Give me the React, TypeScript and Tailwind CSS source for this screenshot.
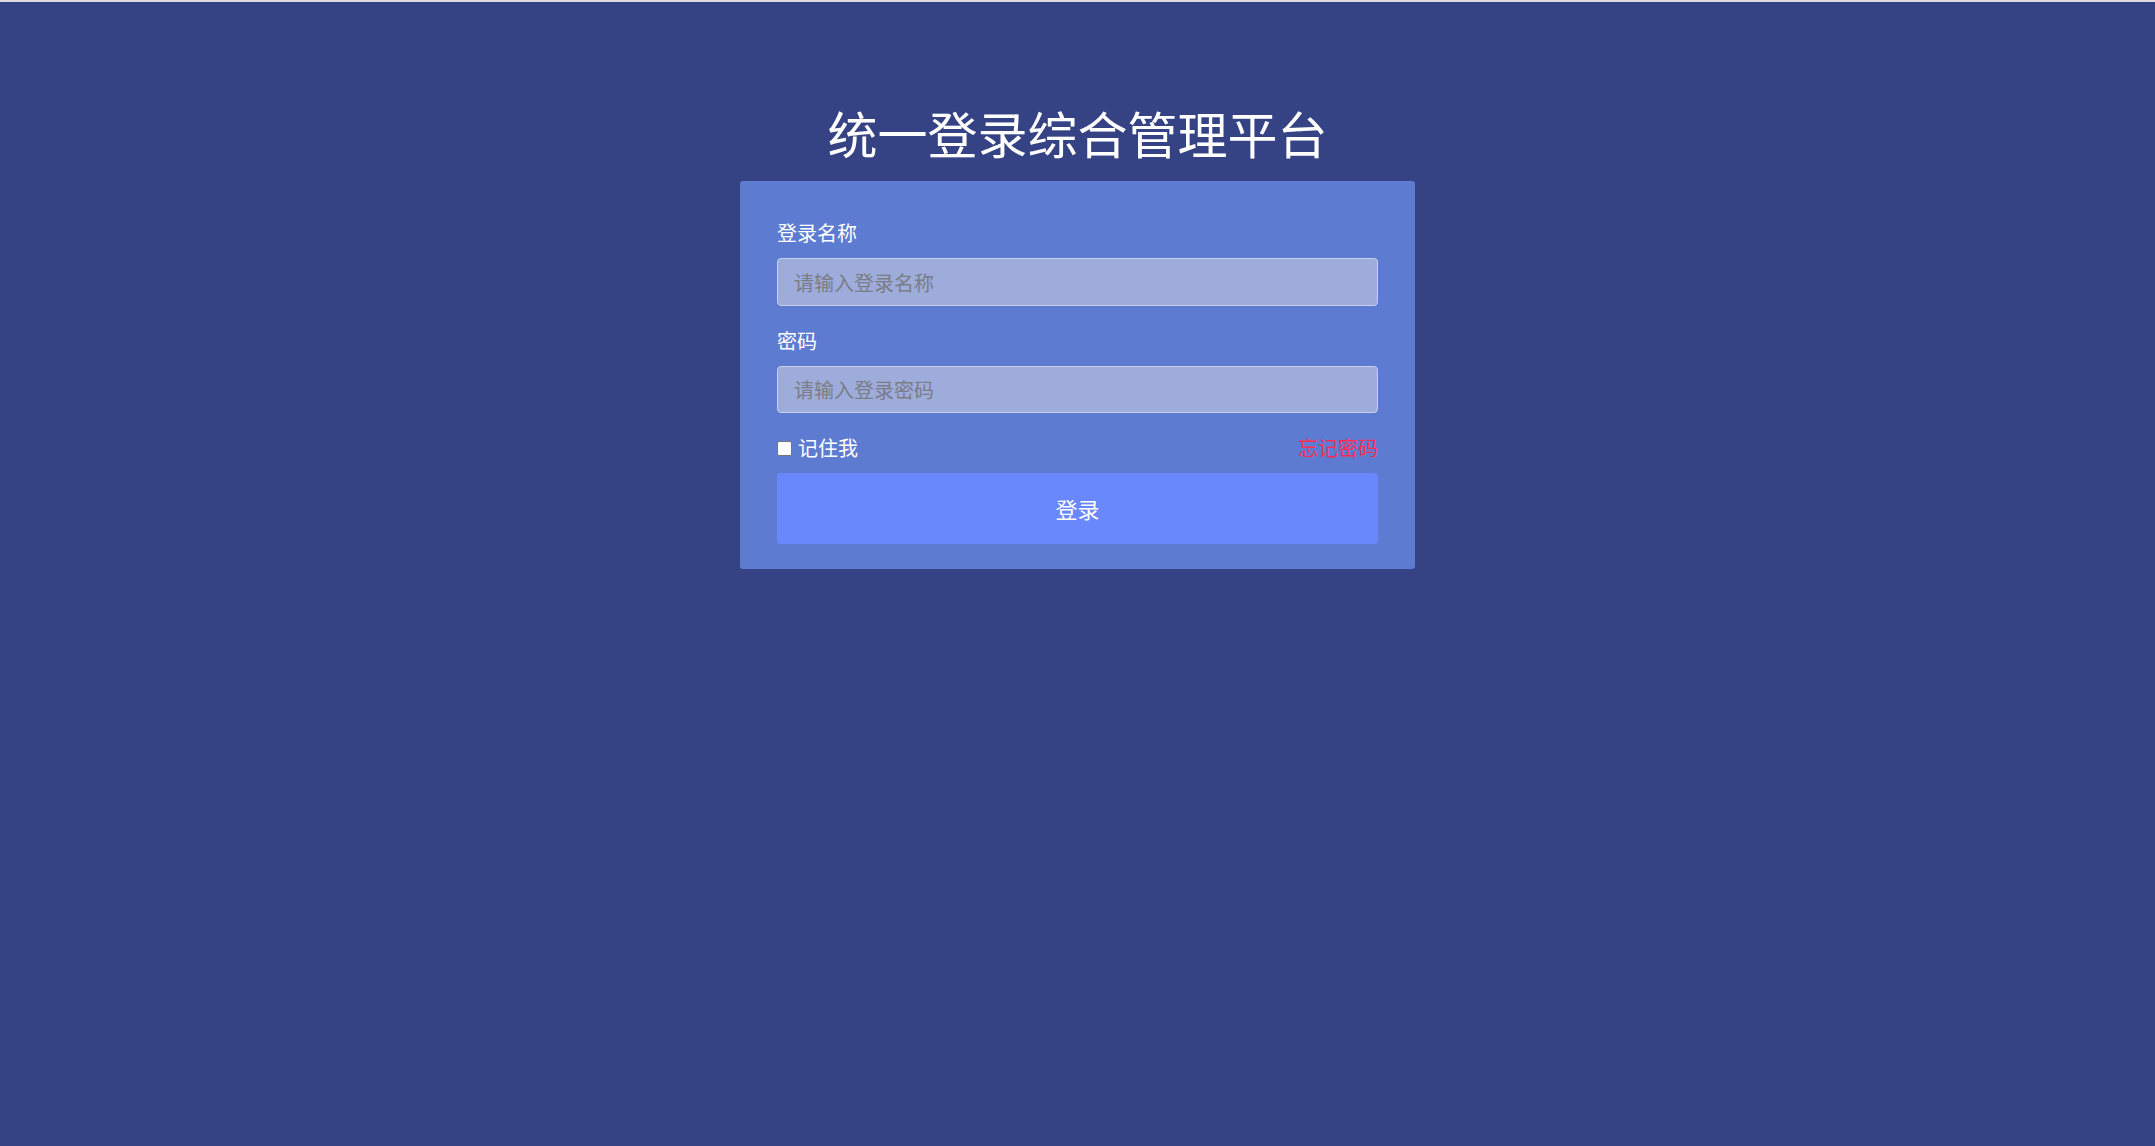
import React from "react";

export default function App() {
  const font = { fontFamily: '"Noto Sans CJK SC", "Noto Sans", sans-serif' };
  return (
    <div className="min-h-screen w-full bg-[#354384] flex flex-col" style={font}>
      <div className="h-[2px] w-full bg-[#dcdde2]" />
      <div className="flex flex-col items-center pt-[103px]">
        <h1 className="text-[50px] leading-[55px] text-white font-normal tracking-[0px]">
          统一登录综合管理平台
        </h1>
        <div className="mt-[21px] w-[675px] bg-[#5d7bd1] rounded-[3px] px-[37px] pt-[38px] pb-[25px] flex flex-col">
          <label className="text-[20px] leading-[28px] text-white">登录名称</label>
          <input
            className="mt-[11px] h-[48px] w-full rounded-[4px] border border-[#c9d0ea] bg-[#9eacdc] px-[16px] text-[20px] text-[#333] outline-none placeholder:text-[#7a7c86]"
            placeholder="请输入登录名称"
          />
          <label className="mt-[21px] text-[20px] leading-[28px] text-white">密码</label>
          <input
            type="password"
            className="mt-[11px] h-[47px] w-full rounded-[4px] border border-[#c9d0ea] bg-[#9eacdc] px-[16px] text-[20px] text-[#333] outline-none placeholder:text-[#7a7c86]"
            placeholder="请输入登录密码"
          />
          <div className="mt-[21px] h-[28px] flex items-center justify-between">
            <label className="flex items-center gap-[6px] text-[20px] leading-[28px] text-white">
              <input
                type="checkbox"
                className="appearance-none w-[15px] h-[15px] bg-white border border-[#767676] rounded-[2px] m-0"
              />
              记住我
            </label>
            <a className="text-[20px] leading-[28px] text-[#ff2d55] cursor-pointer">忘记密码</a>
          </div>
          <button className="mt-[11px] h-[71px] w-full rounded-[4px] bg-[#6888fc] text-white text-[22px]">
            登录
          </button>
        </div>
      </div>
    </div>
  );
}
